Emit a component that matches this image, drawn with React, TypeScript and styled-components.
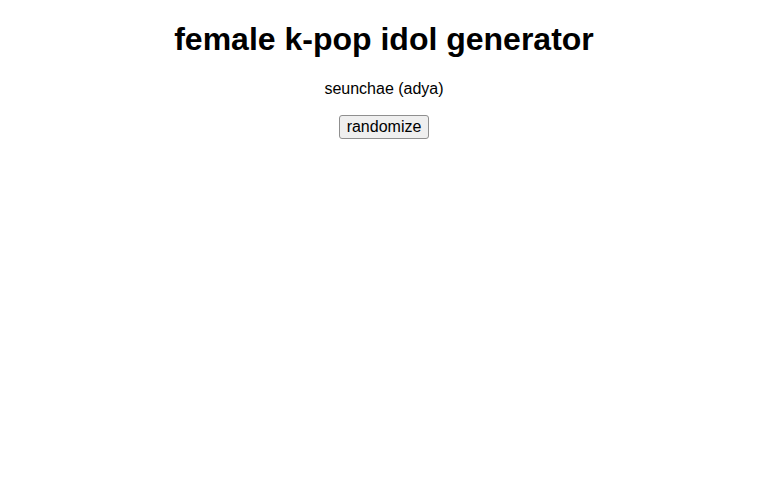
import React, { FC, useState } from "react";
import styled, { createGlobalStyle } from "styled-components";

const GlobalStyle = createGlobalStyle`
  body {
    margin: 0;
    font-family: "Liberation Sans", Arial, sans-serif;
    color: #000;
    background: #fff;
  }
`;

const Wrapper = styled.div`
  text-align: center;
`;

const Title = styled.h1`
  font-size: 32px;
  font-weight: bold;
  margin: 21.44px 0;
`;

const Name = styled.p`
  font-size: 16px;
  margin: 16px 0;
`;

const Controls = styled.div`
  margin: 17px 0;
`;

const Button = styled.button`
  font-family: "Liberation Sans", Arial, sans-serif;
  font-size: 16px;
  color: #000;
  background: #efefef;
  border: 1px solid #8f8f8f;
  border-radius: 3px;
  padding: 2px 7px;
  cursor: pointer;
`;

const names = [
  "seunchae (adya)",
  "minji (sora)",
  "yuna (hari)",
  "jiwoo (eun)",
  "chaeyoung (rin)",
];

const App: FC = () => {
  const [name, setName] = useState<string>(names[0]);

  const onRandomize = () => {
    setName(names[Math.floor(Math.random() * names.length)]);
  };

  return (
    <Wrapper>
      <GlobalStyle />
      <Title>female k-pop idol generator</Title>
      <Name>{name}</Name>
      <Controls>
        <Button onClick={onRandomize}>randomize</Button>
      </Controls>
    </Wrapper>
  );
};

export default App;
